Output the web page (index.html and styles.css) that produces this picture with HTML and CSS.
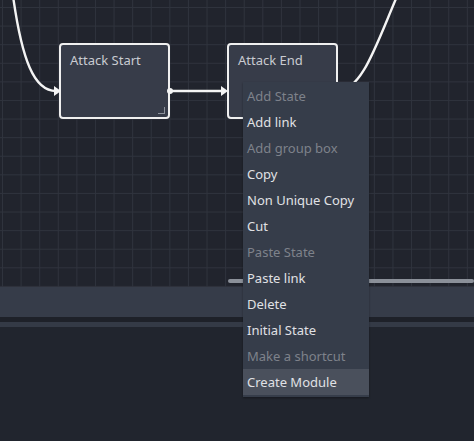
FILE: index.html
```html
<!DOCTYPE html>
<html>
<head>
  <title>State Machine</title>
  <link rel="stylesheet" href="styles.css">
</head>
<body>

<div class="graph">
  <svg class="links" width="474" height="287" viewBox="0 0 474 287">
    <path d="M13,-4 C22,60 34,91 56,91" />
    <path d="M171,91 L222,91" />
    <path d="M337,91 C362,91 376,45 398,-6" />
    <polygon points="54,86 61,91 54,96" />
    <polygon points="221,86 228,91 221,96" />
    <circle cx="170" cy="91" r="3" />
  </svg>

  <div class="node start">
    <div class="node-title">Attack Start</div>
    <span class="resize"></span>
  </div>
  <div class="node end">
    <div class="node-title">Attack End</div>
  </div>

  <div class="scroll-thumb"></div>
</div>

<div class="panel"></div>
<div class="split"></div>
<div class="strip"></div>
<div class="bottom"></div>

<ul class="menu">
  <li class="disabled">Add State</li>
  <li>Add link</li>
  <li class="disabled">Add group box</li>
  <li>Copy</li>
  <li>Non Unique Copy</li>
  <li>Cut</li>
  <li class="disabled">Paste State</li>
  <li>Paste link</li>
  <li>Delete</li>
  <li>Initial State</li>
  <li class="disabled">Make a shortcut</li>
  <li class="hover">Create Module</li>
</ul>

</body>
</html>
```

FILE: styles.css
```css
body {
  margin: 0;
  width: 474px;
  height: 441px;
  overflow: hidden;
  position: relative;
  font-family: "Noto Sans", sans-serif;
  background-color: #21252e;
}

.graph {
  position: relative;
  height: 287px;
  background-color: #21242d;
  background-image:
    linear-gradient(to right, #2f333d 1px, transparent 1px),
    linear-gradient(to bottom, #2f333d 1px, transparent 1px);
  background-size: 18.6px 18.6px;
  background-position: 2px 7px;
}

.links {
  position: absolute;
  left: 0;
  top: 0;
  z-index: 2;
}

.links path {
  fill: none;
  stroke: #f4f4f4;
  stroke-width: 2.4;
}

.links polygon,
.links circle {
  fill: #f4f4f4;
}

.node {
  position: absolute;
  top: 43px;
  width: 107px;
  height: 72px;
  border: 2px solid #f0f0f0;
  border-radius: 4px;
  background-color: #373c49;
  z-index: 1;
}

.node.start {
  left: 59px;
}

.node.end {
  left: 227px;
}

.node-title {
  padding: 6px 0 0 9px;
  font-size: 13px;
  color: #c9cbd1;
}

.resize {
  position: absolute;
  right: 3px;
  bottom: 3px;
  width: 6px;
  height: 6px;
  border-right: 1px solid #8c919b;
  border-bottom: 1px solid #8c919b;
}

.scroll-thumb {
  position: absolute;
  left: 228px;
  right: 0;
  top: 279px;
  height: 4px;
  border-radius: 2px;
  background-color: #8b9099;
}

.panel {
  height: 30px;
  background-color: #363c49;
}

.split {
  height: 5px;
  background-color: #1e2129;
}

.strip {
  height: 5px;
  background-color: #343a46;
}

.menu {
  position: absolute;
  left: 243px;
  top: 82px;
  width: 126px;
  margin: 0;
  padding: 1px 0 2px;
  list-style: none;
  background-color: #363d4a;
  box-shadow: 0 1px 2px rgba(0, 0, 0, 0.35);
  z-index: 3;
}

.menu li {
  height: 26px;
  line-height: 26px;
  padding-left: 4px;
  font-size: 13px;
  color: #e0e1e5;
}

.menu li.disabled {
  color: #7e828b;
}

.menu li.hover {
  background-color: #4a505c;
}
```
